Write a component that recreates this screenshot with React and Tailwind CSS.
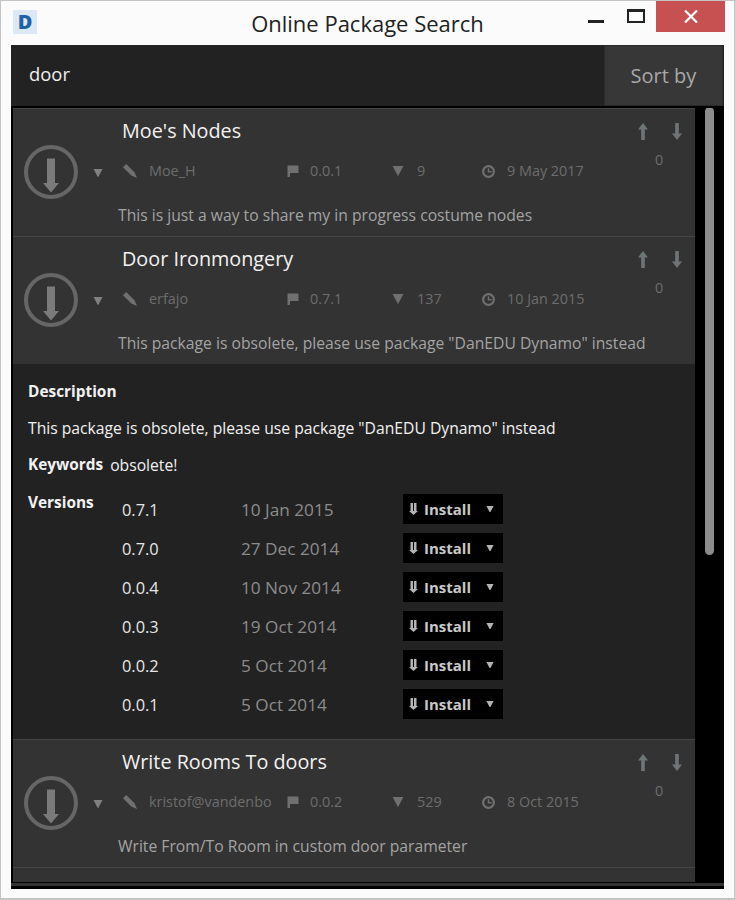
import React from 'react';

const DownCircle = () => (
  <svg width="56" height="56" viewBox="0 0 56 56">
    <circle cx="28" cy="28" r="25" fill="none" stroke="#666666" strokeWidth="4" />
    <path d="M24 14.5h8V39h4l-8 9.5-8-9.5h4z" fill="#7a7a7a" />
  </svg>
);

const Caret = ({ className, fill = '#808080', size = 10 }) => (
  <svg className={className} width={size} height={size * 0.85} viewBox="0 0 10 8.5">
    <path d="M0.5 0h9L5 8.5z" fill={fill} />
  </svg>
);

const Pencil = () => (
  <svg width="14" height="14" viewBox="0 0 14 14">
    <path d="M0 3.2L3.2 0l8.3 8.3L14 14l-5.7-2.5z" fill="#707070" />
  </svg>
);

const Flag = () => (
  <svg width="12" height="12" viewBox="0 0 12 12">
    <path d="M0.5 0.5h11v7.5H3v4H0.5z" fill="#707070" />
  </svg>
);

const Clock = () => (
  <svg width="13" height="13" viewBox="0 0 13 13">
    <circle cx="6.5" cy="6.5" r="5.4" fill="none" stroke="#707070" strokeWidth="2.2" />
    <path d="M6.5 3.2v3.5h3.2" fill="none" stroke="#707070" strokeWidth="1.5" />
  </svg>
);

const Arrow = ({ up }) => (
  <svg className={up ? '' : 'rotate-180'} width="10" height="17" viewBox="0 0 10 17">
    <path d="M5 0l5 6.5H6.8V17H3.2V6.5H0z" fill="#6f7476" />
  </svg>
);

const Row = ({ title, author, version, votes, date, text }) => (
  <div className="flex h-[128px] shrink-0 border-t border-[#454545] bg-[#333333]">
    <div className="flex w-[106px] shrink-0 items-center pb-[1px] pl-[10px]">
      <DownCircle />
      <Caret className="ml-[14px] mt-[2px]" />
    </div>
    <div className="w-[510px] shrink-0">
      <div className="ml-[3px] mt-[7px] h-[30px] text-[19.8px] leading-[30px] text-[#f2f2f2]">{title}</div>
      <div className="ml-[4px] mt-[13px] flex h-[24px] items-center text-[14.4px] text-[#6d6d6d]">
        <div className="w-[26px]"><Pencil /></div>
        <div className="mr-[16px] w-[122px] overflow-hidden whitespace-nowrap">{author}</div>
        <div className="w-[23px]"><Flag /></div>
        <div className="w-[82px]">{version}</div>
        <Caret className="mr-[13px]" fill="#707070" size={12} />
        <div className="w-[65px]">{votes}</div>
        <div className="w-[25px]"><Clock /></div>
        <div>{date}</div>
      </div>
      <div className="-ml-[1px] mt-[21px] whitespace-nowrap text-[15.7px] leading-[22px] text-[#a3a3a3]">{text}</div>
    </div>
    <div className="flex-1 pt-[14px]">
      <div className="ml-[9px] flex gap-[24px]">
        <Arrow up />
        <Arrow />
      </div>
      <div className="ml-[26px] mt-[10px] text-[14.4px] leading-[20px] text-[#6d6d6d]">0</div>
    </div>
  </div>
);

const versions = [
  ['0.7.1', '10 Jan 2015'],
  ['0.7.0', '27 Dec 2014'],
  ['0.0.4', '10 Nov 2014'],
  ['0.0.3', '19 Oct 2014'],
  ['0.0.2', '5 Oct 2014'],
  ['0.0.1', '5 Oct 2014'],
];

const VersionRow = ({ version, date }) => (
  <div className="flex h-[39px] items-center">
    <div className="mt-[3px] w-[119px] text-[16.4px] text-[#e6e6e6]">{version}</div>
    <div className="mt-[3px] w-[162px] text-[17.2px] text-[#8c8c8c]">{date}</div>
    <div className="flex h-[30px] w-[100px] items-center bg-black pb-[1px] pl-[6px] text-[#c8c8c8]">
      <svg className="mt-[1px]" width="9" height="12" viewBox="0 0 9 12">
        <path d="M1.5 0H4v8h1V0h2.5v8H9l-4.5 4L0 8h1.5z" fill="#b4b4b4" />
      </svg>
      <span className="ml-[6px] mt-[2px] text-[15px] font-bold">Install</span>
      <Caret className="ml-[15px] mt-[2px]" fill="#b4b4b4" size={8} />
    </div>
  </div>
);

export default function App() {
  return (
    <div className="h-[900px] w-[735px] overflow-hidden border border-b-2 border-[#c4c4c4] bg-[#fbfbfb] font-['Open_Sans',sans-serif]">
      {/* title bar */}
      <div className="relative flex h-[44px] items-center justify-center">
        <div className="absolute left-[12px] top-[9px] flex h-[24px] w-[24px] items-center justify-center bg-[#dce9f5]">
          <span className="text-[20px] font-extrabold leading-none text-[#1f62a8]">D</span>
        </div>
        <span className="mt-[1px] text-[22px] text-[#222222]">Online Package Search</span>
        <div className="absolute left-[587px] top-[19px] h-[3px] w-[16px] bg-[#222222]" />
        <div className="absolute left-[626px] top-[8px] h-[14px] w-[18px] border-2 border-t-[3px] border-[#222222]" />
        <div className="absolute left-[655px] top-0 flex h-[31px] w-[69px] items-center justify-center bg-[#c75050]">
          <svg width="14" height="13" viewBox="0 0 14 13">
            <path d="M1 0.5l12 12M13 0.5l-12 12" stroke="#ffffff" strokeWidth="2.2" />
          </svg>
        </div>
      </div>

      {/* window content */}
      <div className="ml-[10px] flex h-[844px] w-[713px] flex-col bg-black">
        <div className="flex h-[61px] shrink-0 bg-[#222222]">
          <div className="flex-1 pl-[18px] pt-[15px] text-[18.4px] leading-[28px] text-[#f0f0f0]">door</div>
          <div className="mr-[1px] flex w-[119px] items-center justify-center border border-[#2a2a2a] bg-[#373737] text-[20px] text-[#a8a8a8]">
            Sort by
          </div>
        </div>

        <div className="mt-[2px] flex h-[774px] shrink-0 overflow-hidden">
          <div className="ml-[2px] w-[682px] shrink-0 overflow-hidden">
            <Row
              title="Moe's Nodes"
              author="Moe_H"
              version="0.0.1"
              votes="9"
              date="9 May 2017"
              text="This is just a way to share my in progress costume nodes"
            />
            <Row
              title="Door Ironmongery"
              author="erfajo"
              version="0.7.1"
              votes="137"
              date="10 Jan 2015"
              text={'This package is obsolete, please use package "DanEDU Dynamo" instead'}
            />
            <div className="h-[375px] bg-[#222222] pl-[15px] pt-[15px] text-[#f2f2f2]">
              <div className="mt-[1px] text-[15.4px] font-bold leading-[24px]">Description</div>
              <div className="mt-[12px] text-[15.7px] leading-[24px]">
                This package is obsolete, please use package "DanEDU Dynamo" instead
              </div>
              <div className="mt-[13px] flex items-center leading-[24px]">
                <span className="text-[15.4px] font-bold">Keywords</span>
                <span className="ml-[7px] text-[15.7px]">obsolete!</span>
              </div>
              <div className="mt-[12px] flex">
                <div className="mt-[2px] h-[24px] w-[94px] text-[15.4px] font-bold leading-[24px]">Versions</div>
                <div>
                  {versions.map(([version, date]) => (
                    <VersionRow key={version} version={version} date={date} />
                  ))}
                </div>
              </div>
            </div>
            <Row
              title="Write Rooms To doors"
              author="kristof@vandenbouwhuysen.be"
              version="0.0.2"
              votes="529"
              date="8 Oct 2015"
              text="Write From/To Room in custom door parameter"
            />
            {/* next result, only the tops of its title show above the fold */}
            <div className="h-[15px] overflow-hidden border-t border-[#454545] bg-[#333333] pl-[109px] pt-[7px] text-[19.8px] leading-[30px] text-[#f2f2f2]">
              Change bulk door properties
            </div>
          </div>
          <div className="-mt-[1px] ml-[10px] h-[448px] w-[9px] shrink-0 rounded-full bg-[#8c8c8c]" />
        </div>

        <div className="mt-[1px] h-[3px] shrink-0 bg-[#333333]" />
      </div>
    </div>
  );
}
